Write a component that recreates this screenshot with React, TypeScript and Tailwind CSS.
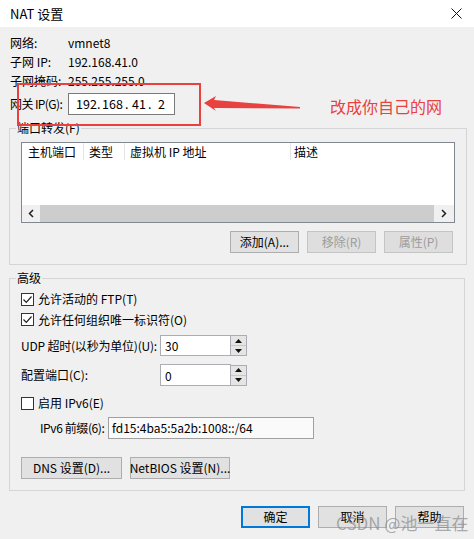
import React from 'react';

const btn = 'h-[22px] border border-[#adadad] bg-[#e1e1e1] flex items-center justify-center leading-none whitespace-nowrap';
const btnDisabled = 'h-[22px] border border-[#c4c4c4] bg-[#dedede] text-[#9c9c9c] flex items-center justify-center leading-none whitespace-nowrap';

const CheckBox: React.FC<{ checked?: boolean }> = ({ checked }) => (
  <span className="w-[13px] h-[13px] border border-[#333333] bg-white flex items-center justify-center shrink-0">
    {checked && (
      <svg width="11" height="11" viewBox="0 0 11 11">
        <polyline points="1.5,5.5 4.3,8.3 9.5,2.5" fill="none" stroke="#222" strokeWidth="1.2" />
      </svg>
    )}
  </span>
);

const Spinner: React.FC = () => (
  <div className="w-[16px] h-[21px] flex flex-col border border-l-0 border-[#abadb3] bg-[#f0f0f0]">
    <div className="flex-1 flex items-center justify-center border-b border-[#c8c8c8] bg-[#e5e5e5]">
      <svg width="7" height="4" viewBox="0 0 7 4"><polygon points="0,4 3.5,0 7,4" fill="#111" /></svg>
    </div>
    <div className="flex-1 flex items-center justify-center bg-[#e5e5e5]">
      <svg width="7" height="4" viewBox="0 0 7 4"><polygon points="0,0 7,0 3.5,4" fill="#111" /></svg>
    </div>
  </div>
);

export default function App() {
  return (
    <div className="relative w-[474px] h-[539px] overflow-hidden bg-[#f0f0f0] text-[12px] text-black whitespace-nowrap font-['Noto_Sans_CJK_SC','Liberation_Sans',sans-serif]">
      {/* title bar */}
      <div className="h-[27px] bg-white flex items-center justify-between pl-[10px] pr-[12px]">
        <span className="text-[13px] leading-none">NAT 设置</span>
        <svg width="11" height="11" viewBox="0 0 11 11">
          <path d="M0.5 0.5 L10.5 10.5 M10.5 0.5 L0.5 10.5" stroke="#111" strokeWidth="1" />
        </svg>
      </div>

      <div className="px-[9px]">
        {/* info */}
        <div className="pt-[6px] pl-[1px]">
          <div className="h-[19px] flex items-center">
            <span className="w-[58px] shrink-0">网络:</span>
            <span>vmnet8</span>
          </div>
          <div className="h-[19px] flex items-center">
            <span className="w-[58px] shrink-0">子网 IP:</span>
            <span>192.168.41.0</span>
          </div>
          <div className="h-[19px] flex items-center">
            <span className="w-[58px] shrink-0">子网掩码:</span>
            <span>255.255.255.0</span>
          </div>
          <div className="mt-[3px] h-[22px] flex items-center">
            <span className="w-[58px] shrink-0 tracking-[-0.6px]">网关 IP(G):</span>
            <div className="w-[107px] h-[22px] border border-[#7a7a7a] bg-white flex items-center pl-[7px] text-[12.5px] leading-none">
              <span className="w-[21px] shrink-0">192</span>
              <span className="w-[5px] shrink-0">.</span>
              <span className="w-[23px] shrink-0">168</span>
              <span className="w-[7px] shrink-0">.</span>
              <span className="w-[16px] shrink-0">41</span>
              <span className="w-[10px] shrink-0">.</span>
              <span>2</span>
            </div>
          </div>
        </div>

        {/* port forwarding */}
        <fieldset className="mt-[5px] w-[456px] border border-[#d5d5d5] px-[11px] pt-[6px] pb-[11px]">
          <legend className="-ml-[5px] px-[1px] leading-[16px]">端口转发(F)</legend>
          <div className="w-[434px] h-[81px] border border-[#828790] bg-white flex flex-col">
            <div className="h-[17px] flex items-center leading-none">
              <div className="w-[62px] h-full pl-[6px] border-r border-[#e5e5e5] flex items-center">主机端口</div>
              <div className="w-[41px] h-full pl-[5px] border-r border-[#e5e5e5] flex items-center">类型</div>
              <div className="w-[166px] h-full pl-[5px] border-r border-[#e5e5e5] flex items-center">虚拟机 IP 地址</div>
              <div className="flex-1 h-full pl-[3px] flex items-center">描述</div>
            </div>
            <div className="flex-1" />
            <div className="h-[17px] flex bg-[#f0f0f0]">
              <div className="w-[18px] flex items-center justify-center">
                <svg width="6" height="9" viewBox="0 0 6 9"><polyline points="5,1 1.5,4.5 5,8" fill="none" stroke="#222" strokeWidth="1.5" /></svg>
              </div>
              <div className="flex-1 bg-[#cdcdcd]" />
              <div className="w-[20px] flex items-center justify-center">
                <svg width="6" height="9" viewBox="0 0 6 9"><polyline points="1,1 4.5,4.5 1,8" fill="none" stroke="#222" strokeWidth="1.5" /></svg>
              </div>
            </div>
          </div>
          <div className="mt-[8px] flex justify-end gap-[8px] pr-[2px]">
            <div className={`${btn} w-[69px]`}>添加(A)...</div>
            <div className={`${btnDisabled} w-[69px]`}>移除(R)</div>
            <div className={`${btnDisabled} w-[69px]`}>属性(P)</div>
          </div>
        </fieldset>

        {/* advanced */}
        <fieldset className="mt-[5px] w-[456px] border border-[#d5d5d5] px-[11px] pt-[3px] pb-[11px]">
          <legend className="-ml-[5px] px-[1px] leading-[16px]">高级</legend>
          <div className="h-[20px] flex items-center gap-[4px]">
            <CheckBox checked />
            <span>允许活动的 FTP(T)</span>
          </div>
          <div className="h-[21px] flex items-center gap-[4px]">
            <CheckBox checked />
            <span>允许任何组织唯一标识符(O)</span>
          </div>
          <div className="mt-[5px] h-[21px] flex items-center">
            <span className="w-[139px] shrink-0 tracking-[-0.2px]">UDP 超时(以秒为单位)(U):</span>
            <div className="w-[71px] h-[21px] border border-[#abadb3] bg-white pl-[4px] pt-[3px] leading-[14px]">30</div>
            <Spinner />
          </div>
          <div className="mt-[8px] h-[22px] flex items-center">
            <span className="w-[139px] shrink-0">配置端口(C):</span>
            <div className="w-[71px] h-[22px] border border-[#abadb3] bg-white pl-[4px] pt-[4px] leading-[14px]">0</div>
            <Spinner />
          </div>
          <div className="mt-[7px] h-[20px] flex items-center gap-[4px]">
            <CheckBox />
            <span>启用 IPv6(E)</span>
          </div>
          <div className="mt-[4px] h-[22px] flex items-center pl-[19px]">
            <span className="w-[68px] shrink-0 tracking-[-0.4px]">IPv6 前缀(6):</span>
            <div className="w-[206px] h-[22px] border border-[#a0a0a0] bg-[#fafafa] pl-[3px] flex items-center">fd15:4ba5:5a2b:1008::/64</div>
          </div>
          <div className="mt-[18px] flex gap-[8px]">
            <div className={`${btn} w-[101px]`}>DNS 设置(D)...</div>
            <div className={`${btn} w-[100px]`}>NetBIOS 设置(N)...</div>
          </div>
        </fieldset>

        {/* dialog buttons */}
        <div className="mt-[15px] flex justify-end gap-[8px] pr-[1px]">
          <div className="h-[22px] w-[69px] border-2 border-[#0078d7] bg-[#e1e1e1] flex items-center justify-center leading-none">确定</div>
          <div className={`${btn} w-[69px]`}>取消</div>
          <div className={`${btn} w-[69px]`}>帮助</div>
        </div>
      </div>

      {/* annotations */}
      <div className="absolute left-[17px] top-[83px] w-[184px] h-[43px] border-2 border-[#e8413f]" />
      <svg className="absolute left-[200px] top-[90px]" width="104" height="26" viewBox="0 0 104 26">
        <polygon points="4,13 16,6 14,10 100,17 100,18.5 14,18 16,21" fill="#e8413f" />
      </svg>
      <span className="absolute left-[330px] top-[96px] text-[16px] leading-[20px] text-[#e8413f]">改成你自己的网</span>
      <span className="absolute left-[336px] top-[512px] text-[17px] leading-[22px] text-[#8a8a8a]/70">CSDN @池一直在</span>
    </div>
  );
}
